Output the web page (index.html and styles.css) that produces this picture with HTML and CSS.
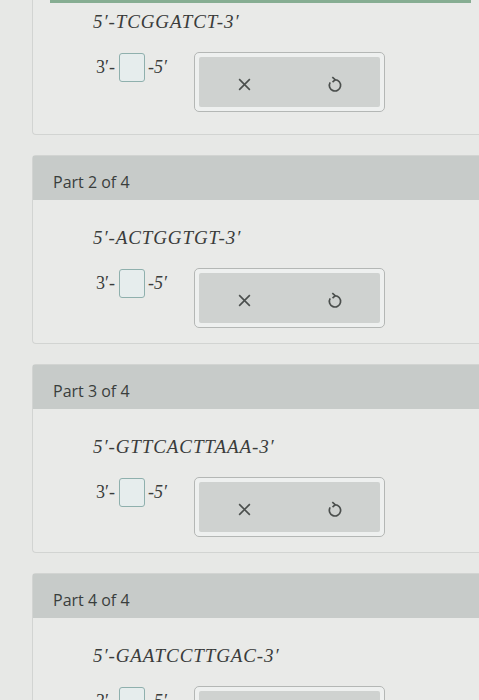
FILE: index.html
```html
<!DOCTYPE html>
<html>
<head>
<meta charset="utf-8">
<link rel="stylesheet" href="styles.css">
</head>
<body>
<div class="topbar"></div>
<div class="page">
  <section class="part">
    <div class="part-header">Part 1 of 4</div>
    <div class="part-body">
      <div class="seq">5′-TCGGATCT-3′</div>
      <div class="answer-row">
        <div class="strand"><span class="up">3′-</span><span class="box"></span><span class="it">-5′</span></div>
        <div class="btn-group"><div class="btn-inner">
          <span class="btn"><svg width="15" height="15" viewBox="0 0 14 14"><path d="M2 2 L12 12 M12 2 L2 12" stroke="#4b4f4d" stroke-width="1.5" fill="none"/></svg></span>
          <span class="btn"><svg width="18" height="18" viewBox="0 0 16 16"><path d="M8 4.2 A5 5 0 1 1 3.7 6.6" stroke="#4b4f4d" stroke-width="1.5" fill="none"/><path d="M5.6 1.8 L8.2 4.2 L5.8 6.3" stroke="#4b4f4d" stroke-width="1.5" fill="none"/></svg></span>
        </div></div>
      </div>
    </div>
  </section>
  <section class="part">
    <div class="part-header">Part 2 of 4</div>
    <div class="part-body">
      <div class="seq">5′-ACTGGTGT-3′</div>
      <div class="answer-row">
        <div class="strand"><span class="up">3′-</span><span class="box"></span><span class="it">-5′</span></div>
        <div class="btn-group"><div class="btn-inner">
          <span class="btn"><svg width="15" height="15" viewBox="0 0 14 14"><path d="M2 2 L12 12 M12 2 L2 12" stroke="#4b4f4d" stroke-width="1.5" fill="none"/></svg></span>
          <span class="btn"><svg width="18" height="18" viewBox="0 0 16 16"><path d="M8 4.2 A5 5 0 1 1 3.7 6.6" stroke="#4b4f4d" stroke-width="1.5" fill="none"/><path d="M5.6 1.8 L8.2 4.2 L5.8 6.3" stroke="#4b4f4d" stroke-width="1.5" fill="none"/></svg></span>
        </div></div>
      </div>
    </div>
  </section>
  <section class="part">
    <div class="part-header">Part 3 of 4</div>
    <div class="part-body">
      <div class="seq">5′-GTTCACTTAAA-3′</div>
      <div class="answer-row">
        <div class="strand"><span class="up">3′-</span><span class="box"></span><span class="it">-5′</span></div>
        <div class="btn-group"><div class="btn-inner">
          <span class="btn"><svg width="15" height="15" viewBox="0 0 14 14"><path d="M2 2 L12 12 M12 2 L2 12" stroke="#4b4f4d" stroke-width="1.5" fill="none"/></svg></span>
          <span class="btn"><svg width="18" height="18" viewBox="0 0 16 16"><path d="M8 4.2 A5 5 0 1 1 3.7 6.6" stroke="#4b4f4d" stroke-width="1.5" fill="none"/><path d="M5.6 1.8 L8.2 4.2 L5.8 6.3" stroke="#4b4f4d" stroke-width="1.5" fill="none"/></svg></span>
        </div></div>
      </div>
    </div>
  </section>
  <section class="part">
    <div class="part-header">Part 4 of 4</div>
    <div class="part-body">
      <div class="seq">5′-GAATCCTTGAC-3′</div>
      <div class="answer-row">
        <div class="strand"><span class="up">3′-</span><span class="box"></span><span class="it">-5′</span></div>
        <div class="btn-group"><div class="btn-inner">
          <span class="btn"><svg width="15" height="15" viewBox="0 0 14 14"><path d="M2 2 L12 12 M12 2 L2 12" stroke="#4b4f4d" stroke-width="1.5" fill="none"/></svg></span>
          <span class="btn"><svg width="18" height="18" viewBox="0 0 16 16"><path d="M8 4.2 A5 5 0 1 1 3.7 6.6" stroke="#4b4f4d" stroke-width="1.5" fill="none"/><path d="M5.6 1.8 L8.2 4.2 L5.8 6.3" stroke="#4b4f4d" stroke-width="1.5" fill="none"/></svg></span>
        </div></div>
      </div>
    </div>
  </section>
</div>
</body>
</html>
```
FILE: styles.css
```css
html, body {
  margin: 0;
  padding: 0;
  background: #e7e8e6;
  overflow: hidden;
  height: 700px;
}
.topbar {
  position: fixed;
  top: 0;
  left: 50px;
  right: 8px;
  height: 3px;
  background: #86ad92;
  z-index: 2;
}
.page {
  margin-top: -61px;
  padding-left: 32px;
  display: flex;
  flex-direction: column;
  gap: 20px;
}
.part {
  border: 1px solid #d2d4d2;
  border-right: none;
  border-radius: 4px 0 0 4px;
  background: #e9eae8;
}
.part-header {
  height: 44px;
  box-sizing: border-box;
  padding-top: 8px;
  background: #c7cbc9;
  display: flex;
  align-items: center;
  padding-left: 20px;
  font-family: "Open Sans", "Liberation Sans", sans-serif;
  font-size: 16px;
  color: #3a3e3c;
}
.part-body {
  padding: 26px 0 15px 60px;
}
.part:first-child .part-body {
  padding-bottom: 22px;
}
.seq {
  font-family: "Liberation Serif", serif;
  font-style: italic;
  font-size: 19px;
  line-height: 24px;
  letter-spacing: 0.9px;
  color: #3a3c3b;
}
.answer-row {
  margin-top: 18px;
  display: flex;
  align-items: flex-start;
  gap: 27px;
}
.strand {
  display: flex;
  align-items: center;
  font-family: "Liberation Serif", serif;
  font-size: 18px;
  color: #3a3c3b;
  height: 30px;
  margin-left: 3px;
}
.up {
  margin-right: 4px;
}
.it {
  font-style: italic;
  margin-left: 3px;
}
.box {
  width: 24px;
  height: 27px;
  border: 1.5px solid #8fb0ad;
  border-radius: 3px;
  background: #e6eded;
}
.btn-group {
  width: 181px;
  height: 50px;
  border: 1px solid #b4b7b5;
  border-radius: 5px;
  background: #eef0ef;
  padding: 4px;
}
.btn-inner {
  height: 100%;
  background: #cfd2d0;
  border-radius: 2px;
  display: flex;
}
.btn {
  flex: 1;
  display: flex;
  align-items: center;
  justify-content: center;
  padding-top: 4px;
}
```
